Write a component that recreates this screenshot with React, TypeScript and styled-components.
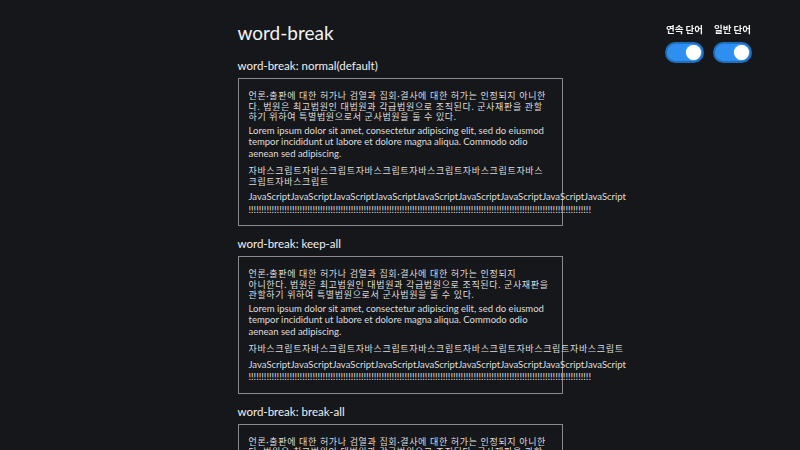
import React, { useState } from "react";
import styled, { createGlobalStyle } from "styled-components";

const GlobalStyle = createGlobalStyle`
  html, body {
    margin: 0;
    padding: 0;
    background: #16171b;
  }
  body {
    color: #e0e0e0;
    font-family: Lato, "Noto Sans CJK KR", sans-serif;
  }
`;

type BreakMode = "normal" | "keep-all" | "break-all";

const Page = styled.main`
  width: 325px;
  margin: 0 auto;
  padding-top: 21px;
`;

const Title = styled.h1`
  margin: 0 0 14px;
  font-size: 19px;
  font-weight: 400;
  line-height: 24px;
  color: #f2f2f2;
`;

const Section = styled.section`
  margin-bottom: 11px;
`;

const Label = styled.h2`
  margin: 0 0 5px;
  font-size: 11.5px;
  font-weight: 400;
  line-height: 14px;
  color: #f0f0f0;
`;

const Box = styled.div<{ $mode: BreakMode }>`
  border: 1px solid #8a8a8a;
  padding: 10px;
  word-break: ${(p) => p.$mode};
`;

const Ko = styled.p<{ $gap?: number }>`
  margin: ${(p) => p.$gap ?? 0}px 0 0;
  font-size: 9px;
  line-height: 10.5px;
  letter-spacing: 0.65px;
  color: #dedede;
`;

const En = styled.p<{ $gap?: number }>`
  margin: ${(p) => p.$gap ?? 0}px 0 0;
  font-size: 9.5px;
  line-height: 11.5px;
  color: #dedede;
`;

const Controls = styled.div`
  position: fixed;
  top: 22px;
  right: 48px;
  display: flex;
  gap: 9px;
`;

const Control = styled.label`
  display: flex;
  flex-direction: column;
  align-items: center;
  gap: 6px;
  cursor: pointer;
`;

const ControlName = styled.span`
  font-family: "Noto Sans CJK KR", sans-serif;
  font-size: 9.5px;
  font-weight: 700;
  line-height: 14px;
  color: #f4f4f4;
`;

const Track = styled.span<{ $on: boolean }>`
  position: relative;
  display: block;
  box-sizing: border-box;
  width: 39px;
  height: 21px;
  border-radius: 11px;
  border: 2px solid ${(p) => (p.$on ? "#1f6fc0" : "#555")};
  background: ${(p) => (p.$on ? "#2f8ff0" : "#444")};
`;

const Knob = styled.span<{ $on: boolean }>`
  position: absolute;
  top: 1px;
  left: ${(p) => (p.$on ? "19px" : "1px")};
  width: 15px;
  height: 15px;
  border-radius: 50%;
  background: #ffffff;
  box-shadow: 0 0 1px rgba(255, 255, 255, 0.8);
`;

const ko1 =
  "언론·출판에 대한 허가나 검열과 집회·결사에 대한 허가는 인정되지 아니한다. 법원은 최고법원인 대법원과 각급법원으로 조직된다. 군사재판을 관할하기 위하여 특별법원으로서 군사법원을 둘 수 있다.";
const en1 =
  "Lorem ipsum dolor sit amet, consectetur adipiscing elit, sed do eiusmod tempor incididunt ut labore et dolore magna aliqua. Commodo odio aenean sed adipiscing.";
const ko2 = "자바스크립트".repeat(7);
const en2 = "JavaScript".repeat(9);
const bang = "!".repeat(134);

const modes: { mode: BreakMode; title: string }[] = [
  { mode: "normal", title: "word-break: normal(default)" },
  { mode: "keep-all", title: "word-break: keep-all" },
  { mode: "break-all", title: "word-break: break-all" },
];

function Toggle({ name }: { name: string }) {
  const [on, setOn] = useState(true);
  return (
    <Control onClick={() => setOn((v) => !v)}>
      <ControlName>{name}</ControlName>
      <Track $on={on}>
        <Knob $on={on} />
      </Track>
    </Control>
  );
}

export default function App() {
  return (
    <>
      <GlobalStyle />
      <Controls>
        <Toggle name="연속 단어" />
        <Toggle name="일반 단어" />
      </Controls>
      <Page>
        <Title>word-break</Title>
        {modes.map(({ mode, title }) => (
          <Section key={mode}>
            <Label>{title}</Label>
            <Box $mode={mode}>
              <Ko $gap={2}>{ko1}</Ko>
              <En $gap={2}>{en1}</En>
              <Ko $gap={7}>{ko2}</Ko>
              <En $gap={4}>{en2}</En>
              <En $gap={1}>{bang}</En>
            </Box>
          </Section>
        ))}
      </Page>
    </>
  );
}
